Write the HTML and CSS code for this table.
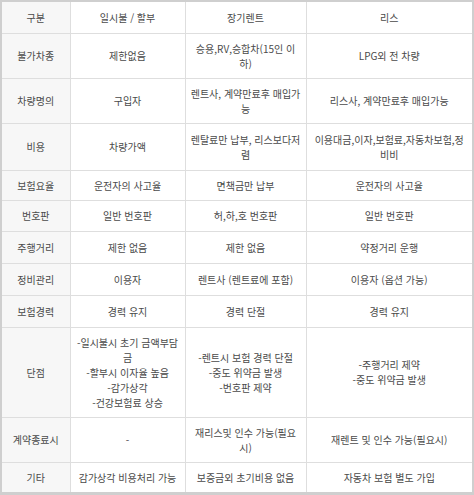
FILE: index.html
```html
<!DOCTYPE html>
<html lang="ko">
<head>
<meta charset="utf-8">
<link rel="stylesheet" href="styles.css">
</head>
<body>
<div class="frame">
<table class="cmp">
<colgroup><col class="c1"><col class="c2"><col class="c3"><col class="c4"></colgroup>
<tr class="h33"><th>구분</th><td>일시불 / 할부</td><td>장기렌트</td><td>리스</td></tr>
<tr class="h45"><th>불가차종</th><td>제한없음</td><td>승용,RV,승합차(15인 이<br>하)</td><td>LPG외 전 차량</td></tr>
<tr class="h45"><th>차량명의</th><td>구입자</td><td>렌트사, 계약만료후 매입가<br>능</td><td>리스사, 계약만료후 매입가능</td></tr>
<tr class="h47"><th>비용</th><td>차량가액</td><td>렌탈료만 납부, 리스보다저<br>렴</td><td>이용대금,이자,보험료,자동차보험,정<br>비비</td></tr>
<tr class="h30"><th>보험요율</th><td>운전자의 사고율</td><td>면책금만 납부</td><td>운전자의 사고율</td></tr>
<tr class="h31"><th>번호판</th><td>일반 번호판</td><td>허,하,호 번호판</td><td>일반 번호판</td></tr>
<tr class="h32"><th>주행거리</th><td>제한 없음</td><td>제한 없음</td><td>약정거리 운행</td></tr>
<tr class="h32"><th>정비관리</th><td>이용자</td><td>렌트사 (렌트료에 포함)</td><td>이용자 (옵션 가능)</td></tr>
<tr class="h32"><th>보험경력</th><td>경력 유지</td><td>경력 단절</td><td>경력 유지</td></tr>
<tr class="h90"><th>단점</th><td>-일시불시 초기 금액부담<br>금<br>-할부시 이자율 높음<br>-감가상각<br>-건강보험료 상승</td><td>-렌트시 보험 경력 단절<br>-중도 위약금 발생<br>-번호판 제약</td><td>-주행거리 제약<br>-중도 위약금 발생</td></tr>
<tr class="h45"><th>계약종료시</th><td>-</td><td>재리스및 인수 가능(필요<br>시)</td><td>재렌트 및 인수 가능(필요시)</td></tr>
<tr class="h30"><th>기타</th><td>감가상각 비용처리 가능</td><td>보증금외 초기비용 없음</td><td>자동차 보험 별도 가입</td></tr>
</table>
</div>
</body>
</html>
```

FILE: styles.css
```css
html, body {
  margin: 0;
  padding: 0;
  background: #ffffff;
}
.frame {
  width: 470px;
  border-left: 2px solid #cfcfcf;
  border-top: 2px solid #cfcfcf;
  border-right: 2px solid #cfcfcf;
  border-bottom: 3px solid #cfcfcf;
}
.cmp {
  width: 470px;
  border-collapse: collapse;
  table-layout: fixed;
  font-family: "Noto Sans CJK KR", "Noto Sans", sans-serif;
  font-size: 10px;
  line-height: 15px;
  color: #4a4a4a;
}
.c1 { width: 68px; }
.c2 { width: 115px; }
.c3 { width: 121px; }
.c4 { width: 166px; }
.cmp th, .cmp td {
  border: 1px solid #dedede;
  padding: 0 4px;
  text-align: center;
  vertical-align: middle;
  font-weight: normal;
}
.cmp th {
  background: #f7f7f7;
}
.cmp tr:first-child th, .cmp tr:first-child td { border-top: none; }
.cmp th { border-left: none; }
.cmp td:last-child { border-right: none; }
.cmp tr:last-child th, .cmp tr:last-child td { border-bottom: none; }
.h30 { height: 30px; }
.h31 { height: 31px; }
.h32 { height: 32px; }
.h33 { height: 31px; }
.h45 { height: 45px; }
.h47 { height: 47px; }
.h90 { height: 90px; }
```
